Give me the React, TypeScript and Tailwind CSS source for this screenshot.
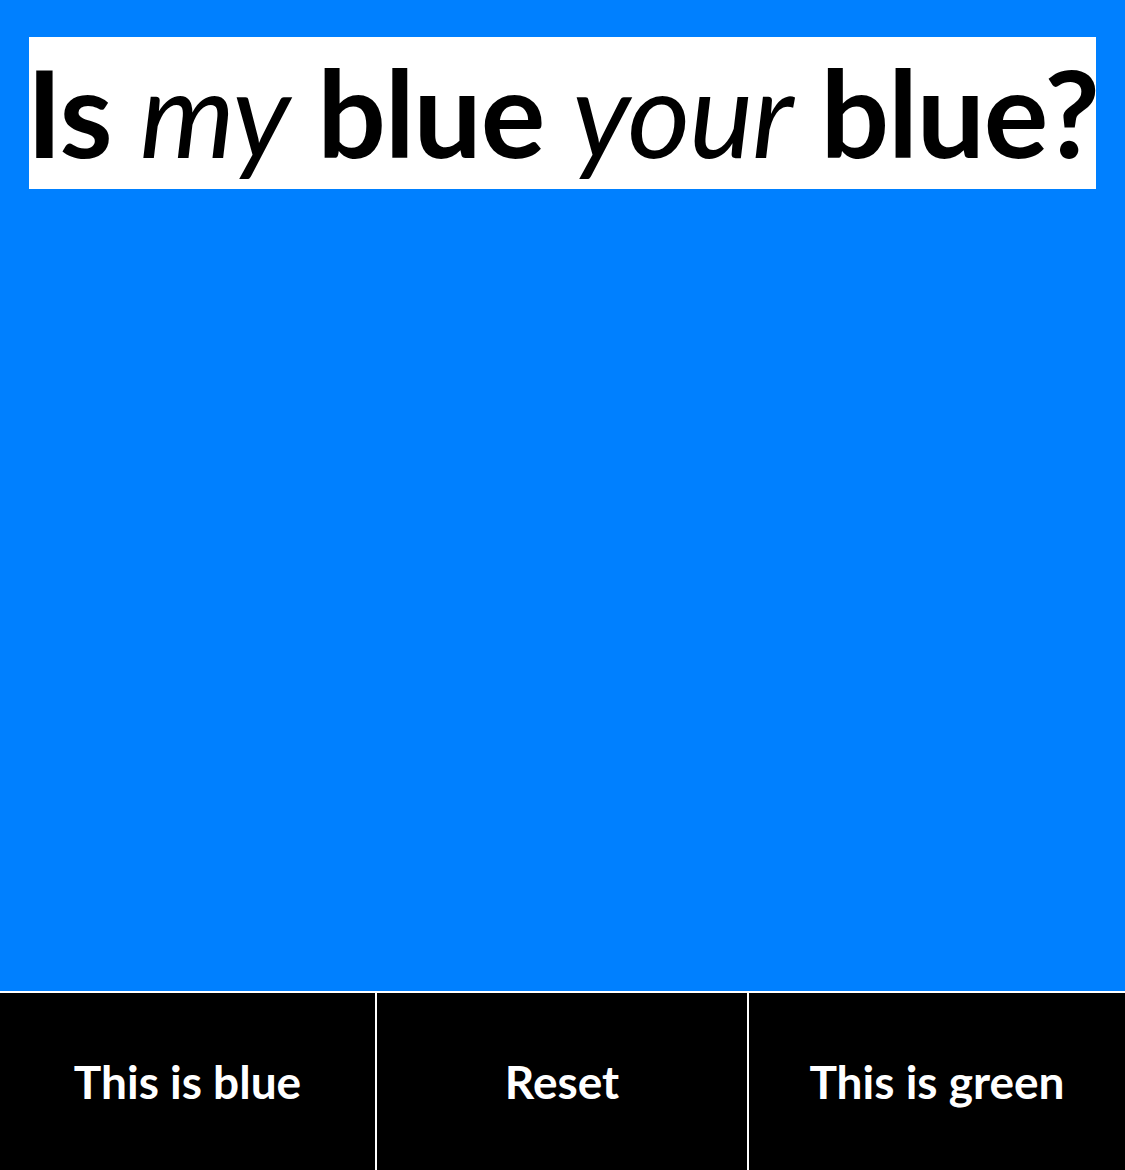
import React from "react";

export default function App() {
  const font = { fontFamily: "Lato, 'Open Sans', sans-serif" };
  return (
    <div className="w-[1125px] h-[1170px] flex flex-col bg-black" style={font}>
      <div className="h-[991px] bg-[#0080ff] pt-[37px] px-[29px]">
        <h1 className="bg-white h-[152px] flex items-center justify-center text-black font-bold text-[121px] leading-none tracking-[-1.2px] whitespace-nowrap">
          <span className="-mt-[4px]">
            Is <em className="font-normal italic">my</em> blue <em className="font-normal italic">your</em> blue?
          </span>
        </h1>
      </div>
      <div className="h-[2px] bg-white" />
      <div className="flex-1 grid grid-cols-[375px_2px_370px_2px_376px] bg-white">
        <button className="bg-black text-white font-bold text-[46px] flex items-center justify-center">This is blue</button>
        <div />
        <button className="bg-black text-white font-bold text-[46px] flex items-center justify-center">Reset</button>
        <div />
        <button className="bg-black text-white font-bold text-[46px] flex items-center justify-center">This is green</button>
      </div>
    </div>
  );
}
